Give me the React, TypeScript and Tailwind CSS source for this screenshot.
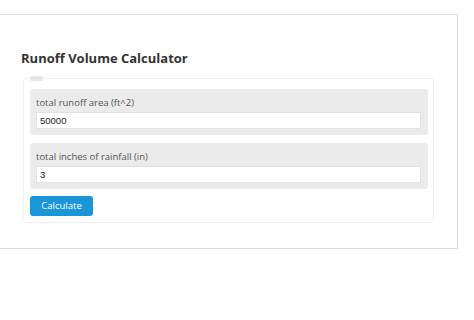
import { useState } from 'react';

interface FieldProps {
  label: string;
  value: string;
  onChange: (v: string) => void;
}

function Field({ label, value, onChange }: FieldProps) {
  return (
    <div className="bg-[#ebebeb] rounded-[3px] pt-[8px] pb-[6px] pl-[6px] pr-[7px]">
      <label className="block text-[9.5px] leading-[12px] text-[#555] mb-[3px] font-['Open_Sans',sans-serif]">
        {label}
      </label>
      <input
        value={value}
        onChange={(e) => onChange(e.target.value)}
        className="block w-full h-[17px] bg-white border border-[#e2e2e2] px-[3px] text-[9.5px] text-[#222] outline-none font-['Liberation_Sans',Arial,sans-serif]"
      />
    </div>
  );
}

export default function App() {
  const [area, setArea] = useState('50000');
  const [rain, setRain] = useState('3');

  return (
    <div className="w-[474px] h-[320px] bg-white pt-[14px] font-['Open_Sans',sans-serif]">
      {/* Outer card, left edge runs off the page */}
      <div className="w-[458px] h-[235px] border-t border-r border-b border-[#dedede] bg-white pl-[21px] pt-[34px]">
        <h1 className="text-[13px] leading-[18px] font-bold text-[#333] mb-[11px]">
          Runoff Volume Calculator
        </h1>

        <div className="relative ml-[2px] w-[411px] border border-[#f0f0f0] rounded-[3px] pt-[10px] pb-[6px] pl-[6px] pr-[5px]">
          <span className="absolute left-[6px] top-[-3px] w-[13px] h-[5px] rounded-full bg-[#e6e6e6]" />
          <div className="flex flex-col gap-[8px]">
            <Field label="total runoff area (ft^2)" value={area} onChange={setArea} />
            <Field label="total inches of rainfall (in)" value={rain} onChange={setRain} />
          </div>
          <button className="mt-[7px] w-[63px] h-[20px] rounded-[3px] bg-[#1a96d6] text-white text-[9.5px] leading-[20px]">
            Calculate
          </button>
        </div>
      </div>
    </div>
  );
}
